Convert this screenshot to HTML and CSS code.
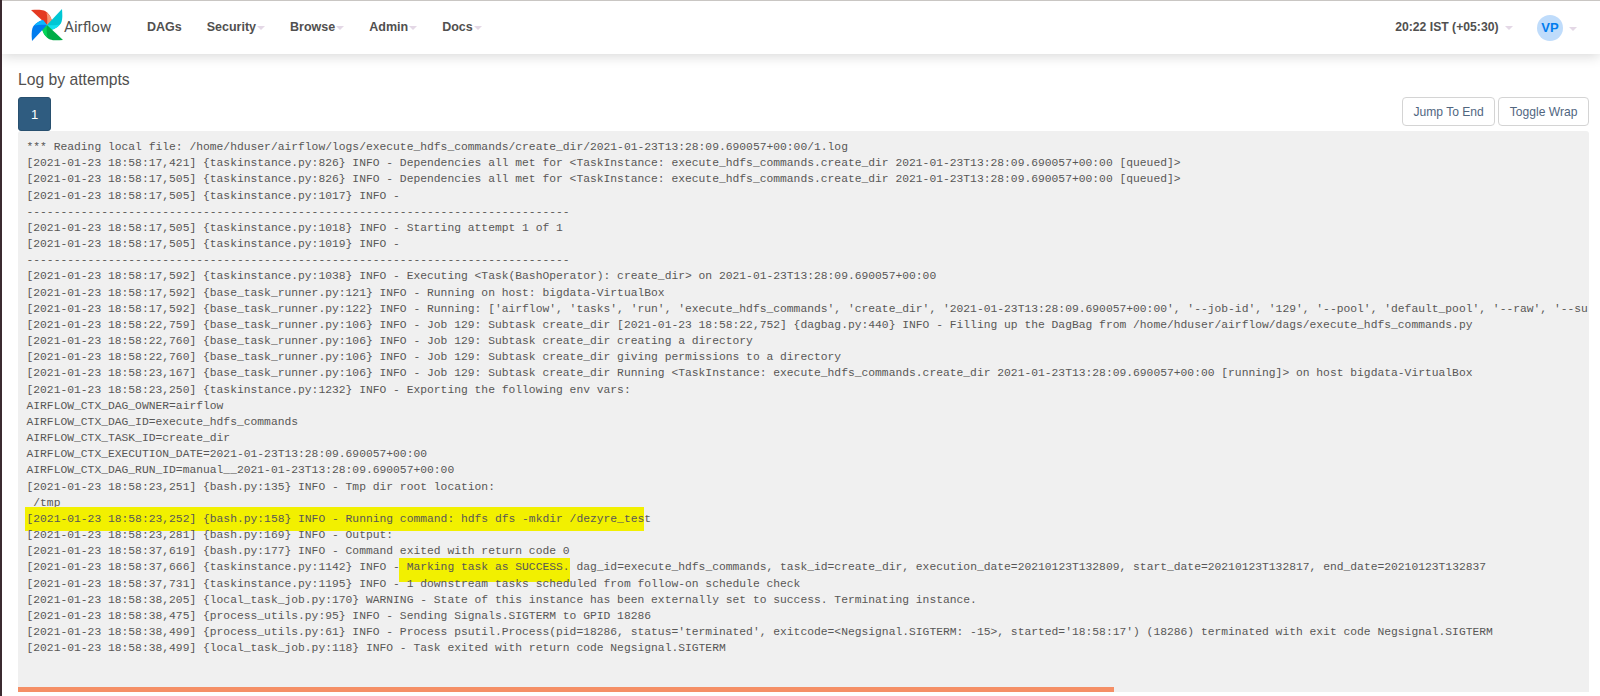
FILE: index.html
```html
<!DOCTYPE html>
<html lang="en">
<head>
<meta charset="utf-8">
<title>Airflow - Log by attempts</title>
<link rel="stylesheet" href="styles.css">
</head>
<body>
<nav class="navbar">
  <a class="brand">
    <svg class="logo" viewBox="0 0 32 32" width="32" height="32">
      <g>
        <path fill="#e43921" d="M0 1C6 .5 10 .5 13 1.500C17 3 20 8 21 12L16 16Z"/>
        <path fill="#f7936f" d="M16 16L21 12C20 8 18 5 15.500 3.500C16.500 8 16.500 12 16 16Z"/>
      </g>
      <g transform="rotate(90 16 16)">
        <path fill="#00c7d4" d="M0 1C6 .5 10 .5 13 1.500C17 3 20 8 21 12L16 16Z"/>
        <path fill="#11e1ee" d="M16 16L21 12C20 8 18 5 15.500 3.500C16.500 8 16.500 12 16 16Z"/>
      </g>
      <g transform="rotate(180 16 16)">
        <path fill="#00ad46" d="M0 1C6 .5 10 .5 13 1.500C17 3 20 8 21 12L16 16Z"/>
        <path fill="#04d659" d="M16 16L21 12C20 8 18 5 15.500 3.500C16.500 8 16.500 12 16 16Z"/>
      </g>
      <g transform="rotate(270 16 16)">
        <path fill="#017cee" d="M0 1C6 .5 10 .5 13 1.500C17 3 20 8 21 12L16 16Z"/>
        <path fill="#0cb6ff" d="M16 16L21 12C20 8 18 5 15.500 3.500C16.500 8 16.500 12 16 16Z"/>
      </g>
    </svg>
    <span class="brand-name">Airflow</span>
  </a>
  <ul class="menu">
    <li class="menu-item">DAGs</li>
    <li class="menu-item">Security<span class="caret"></span></li>
    <li class="menu-item">Browse<span class="caret"></span></li>
    <li class="menu-item">Admin<span class="caret"></span></li>
    <li class="menu-item">Docs<span class="caret"></span></li>
  </ul>
  <div class="nav-right">
    <div class="clock">20:22 IST (+05:30)<span class="caret caret-wide"></span></div>
    <div class="user"><span class="avatar">VP</span><span class="caret"></span></div>
  </div>
</nav>
<main class="content">
  <h4 class="title">Log by attempts</h4>
  <div class="toolbar">
    <a class="tab-active">1</a>
    <div class="actions">
      <button class="btn">Jump To End</button>
      <button class="btn">Toggle Wrap</button>
    </div>
  </div>
  <div class="log-box">
<pre class="log">*** Reading local file: /home/hduser/airflow/logs/execute_hdfs_commands/create_dir/2021-01-23T13:28:09.690057+00:00/1.log
[2021-01-23 18:58:17,421] {taskinstance.py:826} INFO - Dependencies all met for &lt;TaskInstance: execute_hdfs_commands.create_dir 2021-01-23T13:28:09.690057+00:00 [queued]&gt;
[2021-01-23 18:58:17,505] {taskinstance.py:826} INFO - Dependencies all met for &lt;TaskInstance: execute_hdfs_commands.create_dir 2021-01-23T13:28:09.690057+00:00 [queued]&gt;
[2021-01-23 18:58:17,505] {taskinstance.py:1017} INFO - 
--------------------------------------------------------------------------------
[2021-01-23 18:58:17,505] {taskinstance.py:1018} INFO - Starting attempt 1 of 1
[2021-01-23 18:58:17,505] {taskinstance.py:1019} INFO - 
--------------------------------------------------------------------------------
[2021-01-23 18:58:17,592] {taskinstance.py:1038} INFO - Executing &lt;Task(BashOperator): create_dir&gt; on 2021-01-23T13:28:09.690057+00:00
[2021-01-23 18:58:17,592] {base_task_runner.py:121} INFO - Running on host: bigdata-VirtualBox
[2021-01-23 18:58:17,592] {base_task_runner.py:122} INFO - Running: ['airflow', 'tasks', 'run', 'execute_hdfs_commands', 'create_dir', '2021-01-23T13:28:09.690057+00:00', '--job-id', '129', '--pool', 'default_pool', '--raw', '--su</pre>
<pre class="log log-rest">[2021-01-23 18:58:22,759] {base_task_runner.py:106} INFO - Job 129: Subtask create_dir [2021-01-23 18:58:22,752] {dagbag.py:440} INFO - Filling up the DagBag from /home/hduser/airflow/dags/execute_hdfs_commands.py
[2021-01-23 18:58:22,760] {base_task_runner.py:106} INFO - Job 129: Subtask create_dir creating a directory
[2021-01-23 18:58:22,760] {base_task_runner.py:106} INFO - Job 129: Subtask create_dir giving permissions to a directory
[2021-01-23 18:58:23,167] {base_task_runner.py:106} INFO - Job 129: Subtask create_dir Running &lt;TaskInstance: execute_hdfs_commands.create_dir 2021-01-23T13:28:09.690057+00:00 [running]&gt; on host bigdata-VirtualBox
[2021-01-23 18:58:23,250] {taskinstance.py:1232} INFO - Exporting the following env vars:
AIRFLOW_CTX_DAG_OWNER=airflow
AIRFLOW_CTX_DAG_ID=execute_hdfs_commands
AIRFLOW_CTX_TASK_ID=create_dir
AIRFLOW_CTX_EXECUTION_DATE=2021-01-23T13:28:09.690057+00:00
AIRFLOW_CTX_DAG_RUN_ID=manual__2021-01-23T13:28:09.690057+00:00
[2021-01-23 18:58:23,251] {bash.py:135} INFO - Tmp dir root location: 
 /tmp
<span class="hl hl-line">[2021-01-23 18:58:23,252] {bash.py:158} INFO - Running command: hdfs dfs -mkdir /dezyre_tes</span>t
[2021-01-23 18:58:23,281] {bash.py:169} INFO - Output:
[2021-01-23 18:58:37,619] {bash.py:177} INFO - Command exited with return code 0
[2021-01-23 18:58:37,666] {taskinstance.py:1142} INFO - <span class="hl hl-phrase">Marking task as SUCCESS.</span> dag_id=execute_hdfs_commands, task_id=create_dir, execution_date=20210123T132809, start_date=20210123T132817, end_date=20210123T132837
[2021-01-23 18:58:37,731] {taskinstance.py:1195} INFO - 1 downstream tasks scheduled from follow-on schedule check
[2021-01-23 18:58:38,205] {local_task_job.py:170} WARNING - State of this instance has been externally set to success. Terminating instance.
[2021-01-23 18:58:38,475] {process_utils.py:95} INFO - Sending Signals.SIGTERM to GPID 18286
[2021-01-23 18:58:38,499] {process_utils.py:61} INFO - Process psutil.Process(pid=18286, status='terminated', exitcode=&lt;Negsignal.SIGTERM: -15&gt;, started='18:58:17') (18286) terminated with exit code Negsignal.SIGTERM
[2021-01-23 18:58:38,499] {local_task_job.py:118} INFO - Task exited with return code Negsignal.SIGTERM</pre>
    <div class="scrollbar"><div class="scroll-thumb"></div></div>
  </div>
</main>
</body>
</html>
```

FILE: styles.css
```css
* { box-sizing: border-box; }
body {
  margin: 0;
  height: 696px;
  overflow: hidden;
  background: #fff;
  border-left: 2px solid #3b2a30;
  font-family: "Liberation Sans", Arial, sans-serif;
  color: #51504f;
  display: flex;
  flex-direction: column;
}
.navbar {
  flex: none;
  height: 54px;
  border-top: 1px solid #c9c6c3;
  background: #fff;
  box-shadow: 0 2px 12px rgba(0, 0, 0, 0.16);
  display: flex;
  align-items: center;
  padding: 0 23px 2px 28.500px;
  position: relative;
}
.brand { display: flex; align-items: center; width: 116.500px; }
.logo { display: block; flex: none; margin-top: -3px; }
.brand-name {
  margin-left: 1.500px;
  font-family: Roboto, sans-serif;
  font-size: 15.2px;
  color: #51504f;
}
.menu {
  display: flex;
  align-items: center;
  gap: 25px;
  margin: 0;
  padding: 0;
  list-style: none;
}
.menu-item {
  display: flex;
  align-items: center;
  font-size: 12.5px;
  font-weight: 700;
  color: #51504f;
}
.caret {
  display: inline-block;
  width: 0;
  height: 0;
  margin-left: 1px;
  margin-top: 2px;
  border-left: 4px solid transparent;
  border-right: 4px solid transparent;
  border-top: 4px solid #e4d8e6;
}
.caret-wide { margin-left: 6px; }
.nav-right { margin-left: auto; display: flex; align-items: center; gap: 24.500px; }
.clock { font-size: 12.2px; font-weight: 700; display: flex; align-items: center; }
.user { display: flex; align-items: center; margin-top: 2px; }
.user .caret { margin-left: 6px; }
.avatar {
  width: 26px;
  height: 26px;
  border-radius: 50%;
  background: #bfdcfb;
  color: #017cee;
  font-size: 13px;
  font-weight: 700;
  display: flex;
  align-items: center;
  justify-content: center;
}
.content {
  flex: 1;
  min-height: 0;
  padding: 0 11px 4px 16px;
  display: flex;
  flex-direction: column;
}
.title {
  margin: 17px 0 8px;
  font-size: 15.7px;
  line-height: 18px;
  font-weight: 400;
  color: #51504f;
}
.toolbar { display: flex; justify-content: space-between; align-items: flex-start; }
.tab-active {
  width: 33px;
  height: 34px;
  background: #2f5c80;
  border: 1px solid #28506f;
  border-radius: 3px;
  color: #fff;
  font-size: 13px;
  display: flex;
  align-items: center;
  justify-content: center;
}
.actions { display: flex; gap: 3px; }
.btn {
  height: 29px;
  padding: 0 10.500px;
  background: #fff;
  border: 1px solid #d4d4d4;
  border-radius: 4px;
  color: #51667f;
  font-family: inherit;
  font-size: 12.1px;
}
.log-box {
  flex: 1;
  min-height: 0;
  background: #f0f0f0;
  border-radius: 3px 3px 0 0;
  overflow: hidden;
  display: flex;
  flex-direction: column;
}
.log {
  flex: none;
  margin: 0;
  padding: 8px 0 0 8.500px;
  font-family: "Liberation Mono", monospace;
  font-size: 11.32px;
  line-height: 16.17px;
  color: #585756;
  overflow: hidden;
  white-space: pre;
}
.log-rest { flex: 1; padding-top: 0; }
.hl { background: #f2f000; }
.hl-line { padding: 6px 0 6px 2px; margin-left: -2px; }
.hl-phrase { padding: 3px 0 9px 8px; margin-left: -8px; }
.scrollbar { flex: none; height: 5px; }
.scroll-thumb { width: 1096px; height: 5px; background: #f58f66; }
```
